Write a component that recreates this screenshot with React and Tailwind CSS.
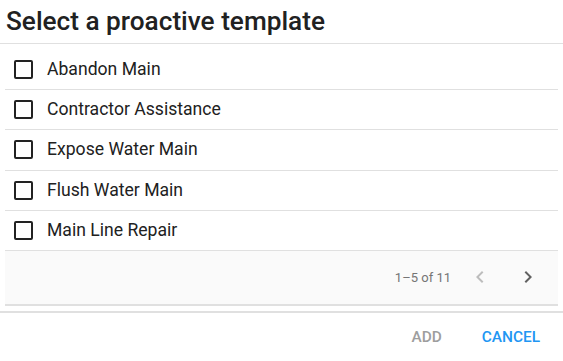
import React from "react";

const templates = [
  "Abandon Main",
  "Contractor Assistance",
  "Expose Water Main",
  "Flush Water Main",
  "Main Line Repair",
];

const Chevron = ({ dir, color }) => (
  <svg width="24" height="24" viewBox="0 0 24 24" fill={color}>
    {dir === "left" ? (
      <path d="M15.41 7.41L14 6l-6 6 6 6 1.41-1.41L10.83 12z" />
    ) : (
      <path d="M8.59 16.59L10 18l6-6-6-6-1.41 1.41L13.17 12z" />
    )}
  </svg>
);

const App = () => {
  return (
    <div
      className="w-[563px] h-[361px] bg-white text-[#212121] overflow-hidden"
      style={{ fontFamily: "Roboto, 'Liberation Sans', sans-serif" }}
    >
      <div className="h-[44px] flex items-center px-[6px] border-b border-[#e0e0e0]">
        <h1 className="text-[26.2px] font-medium leading-[32px] -mt-[2px]">
          Select a proactive template
        </h1>
      </div>

      <div className="mx-[5px] pt-[6px]">
        {templates.map((t) => (
          <div
            key={t}
            className="h-[40.2px] flex items-center pl-[9px] border-b border-[#e0e0e0]"
          >
            <span className="w-[19px] h-[19px] border-2 border-[#222] rounded-[2px] shrink-0" />
            <span className="ml-[14px] text-[17.6px] leading-5 -mt-[1px]">{t}</span>
          </div>
        ))}

        <div className="h-[55px] bg-[#fafafa] border-b-2 border-[#e0e0e0] flex items-center justify-end pr-[18px]">
          <span className="text-[13px] text-[#757575] mr-[17px]">1–5 of 11</span>
          <button className="w-[24px] h-[24px] mr-[24px]">
            <Chevron dir="left" color="#bdbdbd" />
          </button>
          <button className="w-[24px] h-[24px]">
            <Chevron dir="right" color="#616161" />
          </button>
        </div>
      </div>

      <div className="mt-[5px] border-t-2 border-[#e0e0e0] flex justify-end items-center h-[52px] pr-[13px] gap-[16px]">
        <button className="px-[14px] h-[36px] text-[15.4px] font-medium text-[#9e9e9e] uppercase">
          Add
        </button>
        <button className="px-[10px] h-[36px] text-[15.4px] font-medium text-[#2196f3] uppercase">
          Cancel
        </button>
      </div>
    </div>
  );
};

export default App;
